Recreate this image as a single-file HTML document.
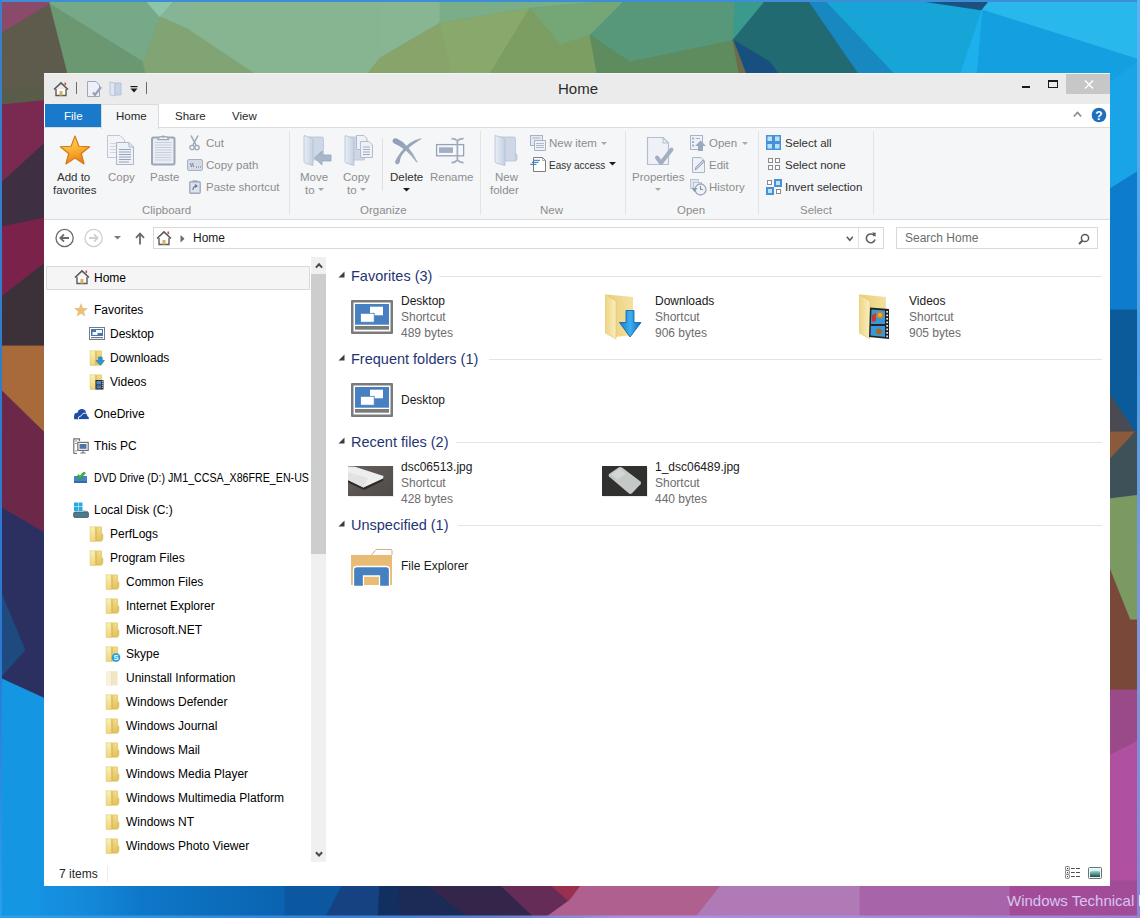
<!DOCTYPE html>
<html><head><meta charset="utf-8">
<style>
html,body{margin:0;padding:0;}
body{width:1140px;height:918px;overflow:hidden;position:relative;font-family:"Liberation Sans",sans-serif;font-size:12px;color:#000;background:#1a9ce0;}
.a{position:absolute;}
.t{position:absolute;white-space:nowrap;line-height:16px;font-size:12px;}
svg{position:absolute;overflow:visible;}
.g{color:#8d8d8d;}
.d{color:#303030;}
</style></head><body>
<!-- WALLPAPER -->
<svg class="a" style="left:0;top:0" width="1140" height="918" viewBox="0 0 1140 918">
<rect x="0" y="0" width="1140" height="918" fill="#1a90d8"/>
<!-- top strip -->
<polygon points="0,0 50,0 50,4 0,34" fill="#8c4a6a" stroke="#8c4a6a" stroke-width="0.8"/>
<polygon points="0,34 50,4 72,90 0,90" fill="#5e5b4c" stroke="#5e5b4c" stroke-width="0.8"/>
<polygon points="50,0 145,0 160,17 143,62 50,4" fill="#76a988" stroke="#76a988" stroke-width="0.8"/>
<polygon points="50,4 143,62 150,90 72,90" fill="#6b9870" stroke="#6b9870" stroke-width="0.8"/>
<polygon points="145,0 175,0 160,17" fill="#8cc4ac" stroke="#8cc4ac" stroke-width="0.8"/>
<polygon points="160,17 175,0 190,0 190,30" fill="#85b595" stroke="#85b595" stroke-width="0.8"/>
<polygon points="160,17 190,30 280,90 150,90 143,62" fill="#80a474" stroke="#80a474" stroke-width="0.8"/>
<polygon points="190,0 380,0 380,58 355,90 280,90 190,30" fill="#88b591" stroke="#88b591" stroke-width="0.8"/>
<polygon points="355,90 380,58 380,90" fill="#8da26c" stroke="#8da26c" stroke-width="0.8"/>
<polygon points="380,0 440,0 440,23 380,58" fill="#88b592" stroke="#88b592" stroke-width="0.8"/>
<polygon points="380,58 440,23 455,90 355,90" fill="#88a46a" stroke="#88a46a" stroke-width="0.8"/>
<polygon points="440,0 625,0 530,8 440,23" fill="#7aae88" stroke="#7aae88" stroke-width="0.8"/>
<polygon points="530,8 625,0 590,35 560,45" fill="#74a676" stroke="#74a676" stroke-width="0.8"/>
<polygon points="440,23 530,8 480,90 455,90" fill="#88a86c" stroke="#88a86c" stroke-width="0.8"/>
<polygon points="530,8 560,45 590,35 600,90 480,90" fill="#7c9e62" stroke="#7c9e62" stroke-width="0.8"/>
<polygon points="625,0 735,0 735,40 630,62 590,35" fill="#58987a" stroke="#58987a" stroke-width="0.8"/>
<polygon points="590,35 630,62 735,40 745,90 600,90" fill="#5e8c5e" stroke="#5e8c5e" stroke-width="0.8"/>
<polygon points="735,0 766,0 733,40" fill="#3a9a8c" stroke="#3a9a8c" stroke-width="0.8"/>
<polygon points="733,40 766,0 808,0 870,90 760,90 745,90" fill="#216a72" stroke="#216a72" stroke-width="0.8"/>
<polygon points="733,40 770,62 790,90 752,90" fill="#17507e" stroke="#17507e" stroke-width="0.8"/>
<polygon points="733,40 752,90 742,90" fill="#6e6a4c" stroke="#6e6a4c" stroke-width="0.8"/>
<polygon points="808,0 825,0 910,90 870,90" fill="#1888c0" stroke="#1888c0" stroke-width="0.8"/>
<polygon points="825,0 915,0 982,10 962,90 910,90" fill="#17a5d8" stroke="#17a5d8" stroke-width="0.8"/>
<polygon points="915,0 990,0 982,10" fill="#1c5080" stroke="#1c5080" stroke-width="0.8"/>
<polygon points="982,10 990,0 1140,0 1140,60" fill="#28b8ec" stroke="#28b8ec" stroke-width="0.8"/>
<polygon points="982,10 1140,60 1140,90 975,90" fill="#14a0e0" stroke="#14a0e0" stroke-width="0.8"/>
<polygon points="982,10 955,90 975,90" fill="#1cb0ec" stroke="#1cb0ec" stroke-width="0.8"/>
<!-- left strip -->
<polygon points="0,88 72,88 72,102 0,105" fill="#5a5c4a" stroke="#5a5c4a" stroke-width="0.8"/>
<polygon points="0,105 50,100 50,138 0,184" fill="#7a2a50" stroke="#7a2a50" stroke-width="0.8"/>
<polygon points="0,184 50,138 50,217 0,227" fill="#3e3042" stroke="#3e3042" stroke-width="0.8"/>
<polygon points="0,227 50,217 50,259 0,298" fill="#7a2249" stroke="#7a2249" stroke-width="0.8"/>
<polygon points="0,298 50,259 50,346 0,346" fill="#3c3039" stroke="#3c3039" stroke-width="0.8"/>
<polygon points="0,346 50,346 50,438 0,389" fill="#a86a3a" stroke="#a86a3a" stroke-width="0.8"/>
<polygon points="0,389 50,438 50,536 0,507" fill="#6c2848" stroke="#6c2848" stroke-width="0.8"/>
<polygon points="0,507 50,536 50,701 0,678" fill="#2c3060" stroke="#2c3060" stroke-width="0.8"/>
<polygon points="0,590 25,650 0,678" fill="#1e4a80" stroke="#1e4a80" stroke-width="0.8"/>
<polygon points="0,678 50,701 50,918 0,918" fill="#1596e2" stroke="#1596e2" stroke-width="0.8"/>
<!-- bottom strip -->
<defs><linearGradient id="bsg" x1="0" y1="0" x2="1" y2="0"><stop offset="0" stop-color="#1592e2"/><stop offset="0.2" stop-color="#1488d8"/><stop offset="0.4" stop-color="#0e78c8"/><stop offset="1" stop-color="#0a62b0"/></linearGradient></defs>
<rect x="40" y="880" width="250" height="38" fill="url(#bsg)"/>
<polygon points="285,880 345,880 325,918 285,918" fill="#0b58a0" stroke="#0b58a0" stroke-width="0.8"/>
<polygon points="345,880 380,880 378,918 325,918" fill="#164282" stroke="#164282" stroke-width="0.8"/>
<polygon points="380,880 398,880 400,918 378,918" fill="#122f62" stroke="#122f62" stroke-width="0.8"/>
<polygon points="398,880 420,880 470,918 400,918" fill="#1c2a56" stroke="#1c2a56" stroke-width="0.8"/>
<polygon points="420,880 495,880 535,918 470,918" fill="#33264a" stroke="#33264a" stroke-width="0.8"/>
<polygon points="495,880 575,880 570,900 545,918 535,918" fill="#652c58" stroke="#652c58" stroke-width="0.8"/>
<polygon points="545,880 585,880 570,902" fill="#9a3050" stroke="#9a3050" stroke-width="0.8"/>
<polygon points="570,900 585,880 725,880 695,918 545,918" fill="#b0608e" stroke="#b0608e" stroke-width="0.8"/>
<polygon points="725,880 860,880 860,918 695,918" fill="#b07ab6" stroke="#b07ab6" stroke-width="0.8"/>
<polygon points="860,880 1010,880 1010,918 860,918" fill="#a864a8" stroke="#a864a8" stroke-width="0.8"/>
<polygon points="1010,880 1140,880 1140,918 1010,918" fill="#a24c98" stroke="#a24c98" stroke-width="0.8"/>
<!-- right strip -->
<polygon points="1100,90 1140,60 1140,170 1100,195" fill="#1aa4e8" stroke="#1aa4e8" stroke-width="0.8"/>
<polygon points="1100,195 1140,170 1140,310 1100,310" fill="#0e7ccc" stroke="#0e7ccc" stroke-width="0.8"/>
<polygon points="1100,310 1140,310 1140,445 1135,432 1100,380" fill="#0b5a9a" stroke="#0b5a9a" stroke-width="0.8"/>
<polygon points="1100,380 1135,432 1100,440" fill="#4a4a52" stroke="#4a4a52" stroke-width="0.8"/>
<polygon points="1100,432 1135,432 1100,475" fill="#8a5a3a" stroke="#8a5a3a" stroke-width="0.8"/>
<polygon points="1100,470 1135,432 1140,440 1140,495 1100,500" fill="#3e5058" stroke="#3e5058" stroke-width="0.8"/>
<polygon points="1100,500 1140,495 1140,620 1130,620 1100,545" fill="#7a9a62" stroke="#7a9a62" stroke-width="0.8"/>
<polygon points="1100,545 1130,620 1140,620 1140,690 1100,690" fill="#7a4838" stroke="#7a4838" stroke-width="0.8"/>
<polygon points="1100,690 1140,690 1140,740 1100,760" fill="#9a4a88" stroke="#9a4a88" stroke-width="0.8"/>
<polygon points="1100,760 1140,740 1140,880 1100,880" fill="#b050a0" stroke="#b050a0" stroke-width="0.8"/>
<!-- frame lines -->
<defs>
<linearGradient id="frb" x1="0" y1="0" x2="1" y2="0"><stop offset="0" stop-color="#28a0f0"/><stop offset="0.3" stop-color="#3a80d8"/><stop offset="0.45" stop-color="#6a80d0"/><stop offset="0.55" stop-color="#b090e0"/><stop offset="1" stop-color="#9a84d8"/></linearGradient>
<linearGradient id="frr" x1="0" y1="0" x2="0" y2="1"><stop offset="0" stop-color="#5ab4f4"/><stop offset="0.4" stop-color="#4a9ce8"/><stop offset="0.6" stop-color="#7a9ad8"/><stop offset="1" stop-color="#8a84d8"/></linearGradient>
<linearGradient id="frl" x1="0" y1="0" x2="0" y2="1"><stop offset="0" stop-color="#3a80c8"/><stop offset="0.7" stop-color="#2a78d0"/><stop offset="1" stop-color="#28a0f0"/></linearGradient>
</defs>
<rect x="0" y="0" width="1140" height="2" fill="#3d8ed6"/>
<rect x="0" y="0" width="2" height="918" fill="url(#frl)"/>
<rect x="1137" y="0" width="3" height="918" fill="url(#frr)"/>
<rect x="0" y="915.5" width="1140" height="2.5" fill="url(#frb)"/>
</svg>
<div class="t" style="left:1007px;top:891px;font-size:15px;line-height:20px;color:#d6c6f0;">Windows Technical</div>


<svg width="0" height="0" style="position:absolute;left:0;top:0">
<defs>
<symbol id="star" viewBox="0 0 16 16"><polygon points="8.0,1.0 9.9,5.9 15.1,6.2 11.0,9.5 12.4,14.6 8.0,11.7 3.6,14.6 5.0,9.5 0.9,6.2 6.1,5.9" fill="#e8c27c"/></symbol>
<symbol id="fld" viewBox="0 0 16 16">
<linearGradient id="fgb" x1="0" y1="0" x2="0" y2="1"><stop offset="0" stop-color="#f3dc86"/><stop offset="1" stop-color="#e2c25e"/></linearGradient>
<linearGradient id="fgf" x1="0" y1="0" x2="0" y2="1"><stop offset="0" stop-color="#fbf1b6"/><stop offset="1" stop-color="#eed47a"/></linearGradient>
<path d="M12.4 7.4 L13.9 8.3 V13.6 L12.4 14.6Z" fill="#e6c864" stroke="#d6b654" stroke-width="0.5"/>
<path d="M6.4 0.9 H12.6 V15.2 H6.4Z" fill="url(#fgb)" stroke="#d8bc5c" stroke-width="0.6"/>
<path d="M1.1 0.8 H6.6 V15.5 H1.1Z" fill="url(#fgf)" stroke="#e2c868" stroke-width="0.6"/>
<path d="M7 1.2 V15" stroke="#d4b050" stroke-width="0.9"/>
</symbol>
<symbol id="fldh" viewBox="0 0 16 16">
<path d="M1.2 1.2 H12.6 V15.4 H1.2Z" fill="#f2e6c6"/>
<path d="M1.2 1.2 H6.6 V15.4 H1.2Z" fill="#f8f1dc"/>
<path d="M6.7 1.5 V15.4" stroke="#e8dab4" stroke-width="0.7"/>
</symbol>
<symbol id="skype" viewBox="0 0 16 16">
<use href="#fld"/>
<circle cx="11" cy="11.5" r="4.3" fill="#1aa0e8"/>
<text x="11" y="14.3" font-family="Liberation Sans" font-weight="bold" font-size="7.5" fill="#fff" text-anchor="middle">S</text>
</symbol>
<symbol id="dl" viewBox="0 0 16 16">
<use href="#fld"/>
<path d="M9.5 7 H13 V10.5 H15.5 L11.25 15.2 L7 10.5 H9.5Z" fill="#2a94dc" stroke="#1a78c0" stroke-width="0.6"/>
</symbol>
<symbol id="vid" viewBox="0 0 16 16">
<use href="#fld"/>
<rect x="6.5" y="6" width="8" height="9.5" fill="#2a2a2a"/>
<rect x="7.5" y="7" width="4.5" height="3.5" fill="#4a8cc8"/><rect x="7.5" y="11.3" width="4.5" height="3.3" fill="#3a7ab8"/>
<g fill="#fff"><rect x="12.8" y="6.8" width="1" height="1"/><rect x="12.8" y="8.8" width="1" height="1"/><rect x="12.8" y="10.8" width="1" height="1"/><rect x="12.8" y="12.8" width="1" height="1"/></g>
</symbol>
<symbol id="desk" viewBox="0 0 16 16">
<rect x="0.5" y="1.5" width="15" height="12" fill="#fff" stroke="#6e7e90" stroke-width="1"/>
<rect x="2" y="3" width="12" height="7" fill="#4d74a8"/>
<rect x="7" y="4" width="6" height="3" fill="#f4f8fc"/><rect x="3.5" y="6" width="5" height="3" fill="#f4f8fc"/>
<rect x="2" y="11" width="12" height="1.2" fill="#6e7e90"/>
</symbol>
<symbol id="cloud" viewBox="0 0 16 16">
<g fill="#1d4fa8"><circle cx="4.3" cy="10" r="3.2"/><circle cx="8.8" cy="7.2" r="4.3"/><rect x="1.1" y="10" width="9" height="3.2"/></g>
<path d="M5.2 13.6 Q4.8 10.2 8.2 9.8 Q9.6 6.4 12.6 7.2 Q15 7.9 14.9 10.3 Q16.6 10.7 16.4 12.4 Q16.3 13.6 15 13.6 Z" fill="#1d4fa8" stroke="#fff" stroke-width="0.9"/>
</symbol>
<symbol id="pc" viewBox="0 0 16 16">
<path d="M0.8 15.5 V0.8 H6.5 V3" fill="none" stroke="#707070" stroke-width="1.2"/>
<path d="M0.8 15.5 H4" fill="none" stroke="#707070" stroke-width="1.2"/>
<rect x="2.2" y="2.5" width="2" height="0.9" fill="#707070"/><rect x="2.2" y="5" width="1.5" height="0.9" fill="#707070"/><rect x="2.2" y="12.5" width="1.5" height="0.9" fill="#707070"/>
<rect x="4.8" y="4.4" width="10.4" height="8" fill="#fff" stroke="#707070" stroke-width="1.2"/>
<rect x="6.5" y="6" width="7" height="4.8" fill="#4d74a8"/>
<path d="M10 12.6 V14.6 M7.3 15 H12.7" stroke="#707070" stroke-width="1.2"/>
</symbol>
<symbol id="dvd" viewBox="0 0 16 16">
<rect x="1" y="6" width="13" height="7" fill="#4a82c4"/>
<rect x="1" y="11" width="13" height="2" fill="#3a6aa8"/>
<path d="M4 6.5 L7 9.5 L12.5 3 Q11 1.5 9.5 3 L7 6 L5.5 4.5Z" fill="#32b83a" stroke="#1a8a2a" stroke-width="0.5"/>
</symbol>
<symbol id="disk" viewBox="0 0 16 16">
<rect x="1" y="0.5" width="4" height="4" fill="#27aadf"/><rect x="5.5" y="0.5" width="4" height="4" fill="#27aadf"/>
<rect x="1" y="5" width="4" height="4" fill="#27aadf"/><rect x="5.5" y="5" width="4" height="4" fill="#27aadf"/>
<rect x="0.6" y="10" width="15" height="5.5" rx="1.5" fill="#5a7282" stroke="#4a5a68" stroke-width="0.8"/>
<rect x="2" y="11.5" width="11" height="2.2" fill="#2e8a9a"/>
<path d="M10 9.2 H13 L15 10" fill="none" stroke="#6a7a88" stroke-width="0.8"/>
</symbol>
</defs>
</svg>

<!-- WINDOW -->
<div class="a" id="win" style="left:44px;top:73px;width:1066px;height:813px;background:#fff;"></div>
<!-- title bar -->
<div class="a" style="left:44px;top:73px;width:1066px;height:31px;background:#ebebeb;border-top:1px solid #f3f5f5;box-sizing:border-box;"></div>
<div class="t" style="left:558px;top:79px;font-size:15px;line-height:20px;color:#2b2b2b;">Home</div>
<!-- close -->
<div class="a" style="left:1066px;top:74px;width:44px;height:20px;background:#c7c7c7;"></div>
<!-- tabs row -->
<div class="a" style="left:44px;top:104px;width:1066px;height:23px;background:#fff;"></div>
<div class="a" style="left:45px;top:104px;width:56px;height:23px;background:#1979ca;"></div>
<div class="t" style="left:64px;top:108px;font-size:11.5px;color:#fff;">File</div>
<!-- ribbon -->
<div class="a" style="left:44px;top:127px;width:1066px;height:91px;background:#f5f6f7;border-top:1px solid #dadbdc;border-bottom:1px solid #dadbdc;"></div>
<!-- home tab -->
<div class="a" style="left:101px;top:104px;width:56px;height:24px;background:#f5f6f7;border:1px solid #dadbdc;border-bottom:none;"></div>
<div class="t" style="left:116px;top:108px;font-size:11.5px;color:#262626;">Home</div>
<div class="t" style="left:175px;top:108px;font-size:11.5px;color:#262626;">Share</div>
<div class="t" style="left:232px;top:108px;font-size:11.5px;color:#262626;">View</div>

<!-- title bar icons -->
<svg style="left:53px;top:81px" width="16" height="16" viewBox="0 0 16 16">
<path d="M3 8 V14.5 H13 V8" fill="#fffdf5" stroke="#5a5a5a" stroke-width="1.4"/>
<path d="M1 8.5 L8 1.8 L15 8.5" fill="none" stroke="#5a5a5a" stroke-width="1.6"/>
<rect x="6.5" y="10" width="3" height="4.5" fill="#d8b26a"/>
<rect x="11.5" y="1.5" width="1.6" height="2.6" fill="#c8503c"/>
</svg>
<div class="a" style="left:76px;top:82px;width:1px;height:12px;background:#6a6a6a;"></div>
<svg style="left:87px;top:81px" width="16" height="16" viewBox="0 0 16 16">
<path d="M0.5 0.5 H9 L12.5 4 V15.5 H0.5 Z" fill="#eef0f8" stroke="#a0a8b8"/>
<path d="M6 11.5 L8 14 L14 6" fill="none" stroke="#98a0b8" stroke-width="2.2"/>
</svg>
<svg style="left:109px;top:81px" width="14" height="16" viewBox="0 0 14 16">
<path d="M1 1 L6 2 V15 L1 14 Z" fill="#dde6f2" stroke="#b4c0d2" stroke-width="0.8"/>
<path d="M6 2 H12 V14 H6 Z" fill="#c8d4e6" stroke="#b0bcd0" stroke-width="0.8"/>
</svg>
<svg style="left:130px;top:86px" width="8" height="7" viewBox="0 0 8 7">
<rect x="0.5" y="0" width="7" height="1.2" fill="#1a1a1a"/><path d="M0.5 2.5 H7.5 L4 6.5 Z" fill="#1a1a1a"/>
</svg>
<div class="a" style="left:146px;top:82px;width:1px;height:12px;background:#6a6a6a;"></div>
<!-- window buttons -->
<div class="a" style="left:1022px;top:86px;width:8px;height:2px;background:#1a1a1a;"></div>
<div class="a" style="left:1048px;top:80px;width:8px;height:5px;border:1px solid #1a1a1a;border-top-width:2px;"></div>
<svg style="left:1084px;top:80px" width="10" height="9" viewBox="0 0 10 9"><path d="M1 0.5 L9 8.5 M9 0.5 L1 8.5" stroke="#fff" stroke-width="1.4"/></svg>
<svg style="left:1073px;top:110px" width="9" height="8" viewBox="0 0 9 8"><path d="M0.8 6.5 L4.5 2.5 L8.2 6.5" fill="none" stroke="#8a8a8a" stroke-width="1.6"/></svg>
<svg style="left:1091px;top:107px" width="16" height="16" viewBox="0 0 16 16"><circle cx="8" cy="8" r="7.3" fill="#1d6fc0"/><text x="8" y="12.6" font-family="Liberation Sans" font-weight="bold" font-size="12" fill="#fff" text-anchor="middle">?</text></svg>

<!-- RIBBON: Clipboard -->
<svg style="left:59px;top:135px" width="32" height="31" viewBox="0 0 32 31">
<defs><linearGradient id="sg" x1="0" y1="0" x2="0.3" y2="1"><stop offset="0" stop-color="#ffe066"/><stop offset="0.55" stop-color="#fbb437"/><stop offset="1" stop-color="#ee8416"/></linearGradient></defs>
<polygon points="16.0,1.0 19.9,11.2 30.7,11.7 22.3,18.5 25.1,29.0 16.0,23.1 6.9,29.0 9.7,18.5 1.3,11.7 12.1,11.2" fill="url(#sg)" stroke="#d27712" stroke-width="1.1" stroke-linejoin="round"/>
</svg>
<div class="t d" style="left:57px;top:169px;font-size:11.5px;">Add to</div>
<div class="t d" style="left:53px;top:182px;font-size:11.5px;">favorites</div>
<svg style="left:107px;top:135px" width="28" height="31" viewBox="0 0 28 31">
<path d="M0.5 0.5 H13 L17.5 5 V22.5 H0.5 Z" fill="#f2f4f8" stroke="#c0c6d2"/>
<g stroke="#d0d6e0"><path d="M3 8.5H14M3 11.5H14M3 14.5H14M3 17.5H14"/></g>
<path d="M9.5 7.5 H22 L26.5 12 V29.5 H9.5 Z" fill="#eef1f7" stroke="#aeb6c6"/>
<path d="M22 7.5 V12 H26.5" fill="none" stroke="#aeb6c6"/>
<g stroke="#98a4b8"><path d="M12 14.5H24M12 17H24M12 19.5H24M12 22H24M12 24.5H24M12 27H22"/></g>
</svg>
<div class="t g" style="left:108px;top:169px;font-size:11.5px;">Copy</div>
<svg style="left:151px;top:135px" width="25" height="31" viewBox="0 0 25 31">
<rect x="1" y="2.5" width="22.5" height="27" rx="1.5" fill="#e9edf4" stroke="#9ea7b8" stroke-width="2"/>
<g stroke="#c4cad6" stroke-width="0.9"><path d="M4 7.5H20.5M4 10H20.5M4 12.5H20.5M4 15H20.5M4 17.5H20.5M4 20H20.5M4 22.5H20.5M4 25H20.5"/></g>
<path d="M7 4.6 Q7.5 1.6 10.5 1.6 H14 Q17 1.6 17.5 4.6 Z" fill="#f0f2f6" stroke="#9ea7b8" stroke-width="1.2"/>
<circle cx="12.25" cy="1.6" r="1" fill="none" stroke="#9ea7b8" stroke-width="0.8"/>
</svg>
<div class="t g" style="left:150px;top:169px;font-size:11.5px;">Paste</div>
<svg style="left:189px;top:135px" width="11" height="16" viewBox="0 0 11 16">
<path d="M2 0.5 L7 10 M9 0.5 L4 10" stroke="#a0a8b8" stroke-width="1.6"/>
<circle cx="3" cy="12.5" r="2.2" fill="none" stroke="#a0a8b8" stroke-width="1.3"/><circle cx="8" cy="12.5" r="2.2" fill="none" stroke="#a0a8b8" stroke-width="1.3"/>
</svg>
<div class="t g" style="left:206px;top:135px;font-size:11.5px;">Cut</div>
<svg style="left:187px;top:159px" width="16" height="12" viewBox="0 0 16 12">
<rect x="0.5" y="0.5" width="15" height="11" rx="1.5" fill="#d4dae6" stroke="#a8b2c4"/>
<path d="M3.5 4 L4.5 8 M5.5 4 L6.5 8" stroke="#6a7488" stroke-width="0.9"/><path d="M9 8H10M11 8H12M13 8H14" stroke="#6a7488"/>
</svg>
<div class="t g" style="left:206px;top:157px;font-size:11.5px;">Copy path</div>
<svg style="left:189px;top:180px" width="12" height="14" viewBox="0 0 12 14">
<rect x="0.8" y="1.8" width="10.4" height="11.4" rx="1" fill="#dde3ee" stroke="#a0aabc" stroke-width="1.4"/>
<rect x="3.5" y="0.3" width="5" height="2" fill="#a0aabc"/>
<path d="M4 10 Q4 6 7.5 6 M6 4.5 L8 6 L6 7.5" fill="none" stroke="#6a7488" stroke-width="1.1"/>
</svg>
<div class="t g" style="left:206px;top:179px;font-size:11.5px;">Paste shortcut</div>
<div class="t g" style="left:142px;top:202px;font-size:11.5px;">Clipboard</div>
<div class="a" style="left:289px;top:131px;width:1px;height:84px;background:#e2e3e4;"></div>

<!-- RIBBON: Organize -->
<svg style="left:303px;top:134px" width="29" height="33" viewBox="0 0 29 33">
<defs><linearGradient id="fg" x1="0" y1="0" x2="1" y2="0"><stop offset="0" stop-color="#e8eef6"/><stop offset="1" stop-color="#c4d0e2"/></linearGradient></defs>
<path d="M6 3 H19 Q20.5 3 20.5 4.5 V26 H6 Z" fill="#cdd7e6" stroke="#b8c4d6" stroke-width="0.8"/>
<path d="M1 1.5 L9 4 Q10 4.5 10 6 V31.5 L2 29 Q1 28.5 1 27 Z" fill="url(#fg)" stroke="#b4c0d4" stroke-width="0.8"/>
<path d="M11.5 24 L19 17 V21 H28 V27 H19 V31 Z" fill="#a8b6cc" stroke="#96a4bc" stroke-width="0.8"/>
</svg>
<div class="t g" style="left:300px;top:169px;font-size:11.5px;">Move</div>
<div class="t g" style="left:305px;top:182px;font-size:11.5px;">to</div>
<svg style="left:318px;top:188px" width="6" height="4" viewBox="0 0 6 4"><path d="M0 0H6L3 3Z" fill="#a8a8a8"/></svg>
<svg style="left:344px;top:134px" width="30" height="33" viewBox="0 0 30 33">
<path d="M6 3 H19 Q20.5 3 20.5 4.5 V26 H6 Z" fill="#cdd7e6" stroke="#b8c4d6" stroke-width="0.8"/>
<path d="M1 1.5 L9 4 Q10 4.5 10 6 V31.5 L2 29 Q1 28.5 1 27 Z" fill="url(#fg)" stroke="#b4c0d4" stroke-width="0.8"/>
<path d="M12.5 1.5 H20 L23 4.5 V15.5 H12.5 Z" fill="#eef1f7" stroke="#aeb6c6" stroke-width="0.9"/>
<path d="M16.5 7.5 H25 L28.5 11 V23.5 H16.5 Z" fill="#eef1f7" stroke="#aeb6c6" stroke-width="0.9"/>
<g stroke="#98a4b8" stroke-width="0.9"><path d="M19 13H26M19 15.5H26M19 18H26M19 20.5H26"/></g>
</svg>
<div class="t g" style="left:343px;top:169px;font-size:11.5px;">Copy</div>
<div class="t g" style="left:347px;top:182px;font-size:11.5px;">to</div>
<svg style="left:360px;top:188px" width="6" height="4" viewBox="0 0 6 4"><path d="M0 0H6L3 3Z" fill="#a8a8a8"/></svg>
<div class="a" style="left:382px;top:138px;width:1px;height:53px;background:#dfe0e2;"></div>
<svg style="left:392px;top:137px" width="31" height="29" viewBox="0 0 31 29">
<defs><linearGradient id="xg" x1="0" y1="0" x2="1" y2="1"><stop offset="0" stop-color="#8e9cb4"/><stop offset="1" stop-color="#a4b0c4"/></linearGradient></defs>
<path d="M0.6 3.2 Q1.8 0.6 5 1.6 Q16 6.5 25.6 25 Q24.8 25.8 24 24.8 Q14.5 11.5 1.8 6.2 Q0.2 5 0.6 3.2 Z" fill="url(#xg)"/>
<path d="M29.2 1.2 Q17 3.5 8.5 15.5 Q4.5 21 3.2 24.5 Q2.8 27.6 5.6 27.2 Q8.2 26.4 8.2 22.2 Q10.5 13.5 29.4 2 Z" fill="url(#xg)"/>
</svg>
<div class="t d" style="left:390px;top:169px;font-size:11.5px;">Delete</div>
<svg style="left:403px;top:188px" width="7" height="4" viewBox="0 0 7 4"><path d="M0 0H7L3.5 3.5Z" fill="#1a1a1a"/></svg>
<svg style="left:436px;top:137px" width="29" height="27" viewBox="0 0 29 27">
<rect x="0.6" y="7.6" width="27" height="11.2" fill="#f6f8fb" stroke="#96a2b6" stroke-width="1.3"/>
<rect x="3" y="10.3" width="14" height="5.6" fill="#a2aec2"/>
<path d="M15.5 1.6 Q19 1.4 21.4 3.8 Q24 1.4 27.6 1.6 M21.4 3.8 V23.2 M15.5 25.6 Q19 25.8 21.4 23.2 Q24 25.8 27.6 25.6" fill="none" stroke="#a0acc0" stroke-width="1.7"/>
</svg>
<div class="t g" style="left:430px;top:169px;font-size:11.5px;">Rename</div>
<div class="t g" style="left:360px;top:202px;font-size:11.5px;">Organize</div>
<div class="a" style="left:480px;top:131px;width:1px;height:84px;background:#e2e3e4;"></div>

<!-- RIBBON: New -->
<svg style="left:494px;top:134px" width="24" height="33" viewBox="0 0 24 33">
<path d="M6 3 H20 Q21.5 3 21.5 4.5 V27 H6 Z" fill="#cdd7e6" stroke="#b8c4d6" stroke-width="0.8"/>
<path d="M1 1.5 L10 4 Q11 4.5 11 6 V31.5 L2 29 Q1 28.5 1 27 Z" fill="url(#fg)" stroke="#b4c0d4" stroke-width="0.8"/>
<path d="M21.5 19 L23 21 V26 L21.5 27" fill="#c0cce0" stroke="#b4c0d4" stroke-width="0.6"/>
</svg>
<div class="t g" style="left:495px;top:169px;font-size:11.5px;">New</div>
<div class="t g" style="left:490px;top:182px;font-size:11.5px;">folder</div>
<svg style="left:530px;top:135px" width="16" height="16" viewBox="0 0 16 16">
<rect x="0.5" y="0.5" width="12" height="10" fill="#e4e9f2" stroke="#a8b2c4"/>
<path d="M2.5 3 H10" stroke="#a8b2c4"/>
<path d="M4.5 5.5 H15.5 V15.5 H4.5 Z" fill="#eef1f7" stroke="#a8b2c4"/>
<path d="M6 8.5H14M6 10.5H14M6 12.5H14" stroke="#b0b9c8"/>
</svg>
<div class="t g" style="left:549px;top:135px;font-size:11.5px;">New item</div>
<svg style="left:601px;top:142px" width="6" height="4" viewBox="0 0 6 4"><path d="M0 0H6L3 3Z" fill="#a8a8a8"/></svg>
<svg style="left:530px;top:157px" width="17" height="16" viewBox="0 0 17 16">
<path d="M3.5 0.5 H12.5 L15.5 3.5 V14.5 H3.5 Z" fill="#fff" stroke="#6e6e6e" stroke-width="0.9"/>
<path d="M12.5 0.5 V3.5 H15.5" fill="none" stroke="#8a8a8a" stroke-width="0.7"/>
<path d="M4 3.3 H10 M2 5.3 H8.5 M0.3 7.3 H6.5" stroke="#2a74c0" stroke-width="1"/>
</svg>
<div class="t d" style="left:549px;top:157px;font-size:11.5px;"><span style="display:inline-block;transform:scaleX(0.87);transform-origin:0 0;">Easy access</span></div>
<svg style="left:609px;top:162px" width="7" height="4" viewBox="0 0 7 4"><path d="M0 0H7L3.5 3.5Z" fill="#1a1a1a"/></svg>
<div class="t g" style="left:540px;top:202px;font-size:11.5px;">New</div>
<div class="a" style="left:625px;top:131px;width:1px;height:84px;background:#e2e3e4;"></div>

<!-- RIBBON: Open -->
<svg style="left:646px;top:136px" width="28" height="31" viewBox="0 0 28 31">
<path d="M1.5 1.5 H17 L22.5 7 V28.5 H1.5 Z" fill="#eef2f8" stroke="#b4bed0" stroke-width="1.2"/>
<path d="M17 1.5 V7 H22.5" fill="none" stroke="#b4bed0"/>
<path d="M11 21.5 L15 27 L25.5 13.5" fill="none" stroke="#a2aec2" stroke-width="4" stroke-linecap="round" stroke-linejoin="round"/>
</svg>
<div class="t g" style="left:632px;top:169px;font-size:11.5px;">Properties</div>
<svg style="left:655px;top:188px" width="6" height="4" viewBox="0 0 6 4"><path d="M0 0H6L3 3Z" fill="#a8a8a8"/></svg>
<svg style="left:690px;top:135px" width="17" height="17" viewBox="0 0 17 17">
<rect x="0.5" y="0.5" width="12" height="14" fill="#eef1f7" stroke="#aab4c6"/>
<rect x="2" y="2.5" width="2" height="2" fill="#aab4c6"/><rect x="2" y="6" width="2" height="2" fill="#aab4c6"/><rect x="2" y="9.5" width="2" height="2" fill="#aab4c6"/>
<path d="M5.5 3.5H10" stroke="#aab4c6"/>
<path d="M5 11 L10.5 5.5 L16 11 H13 V16 H8 V11 Z" fill="#9aa8c0"/>
</svg>
<div class="t g" style="left:709px;top:135px;font-size:11.5px;">Open</div>
<svg style="left:742px;top:142px" width="6" height="4" viewBox="0 0 6 4"><path d="M0 0H6L3 3Z" fill="#a8a8a8"/></svg>
<svg style="left:692px;top:157px" width="14" height="16" viewBox="0 0 14 16">
<path d="M0.5 0.5 H9 L12.5 4 V15.5 H0.5 Z" fill="#eef1f7" stroke="#aab4c6"/>
<path d="M3 13 L4 10 L11 3 L12.5 4.5 L5.5 11.5 Z" fill="#c4ccdb" stroke="#8e9ab0" stroke-width="0.8"/>
</svg>
<div class="t g" style="left:709px;top:157px;font-size:11.5px;">Edit</div>
<svg style="left:690px;top:179px" width="17" height="17" viewBox="0 0 17 17">
<rect x="0.5" y="0.5" width="8" height="9" fill="#dfe4ee" stroke="#b4bdcc" stroke-width="0.8"/>
<rect x="3.5" y="3.5" width="8" height="8" fill="#e8ecf4" stroke="#b4bdcc" stroke-width="0.8"/>
<circle cx="10.5" cy="10.5" r="5.5" fill="#eef1f7" stroke="#9aa6ba" stroke-width="1.3"/>
<path d="M10.5 7 V10.5 H13" fill="none" stroke="#8090a8" stroke-width="1.1"/>
<path d="M1.5 9 L4.5 13 L7.5 9" fill="#8e9ab0"/>
</svg>
<div class="t g" style="left:709px;top:179px;font-size:11.5px;">History</div>
<div class="t g" style="left:677px;top:202px;font-size:11.5px;">Open</div>
<div class="a" style="left:758px;top:131px;width:1px;height:84px;background:#e2e3e4;"></div>

<!-- RIBBON: Select -->
<svg style="left:766px;top:135px" width="16" height="16" viewBox="0 0 16 16">
<rect x="0" y="0" width="15" height="15" fill="#4a90d8"/>
<rect x="1.5" y="1.5" width="4.5" height="4.5" fill="#b4e4fa"/><rect x="9" y="1.5" width="4.5" height="4.5" fill="#b4e4fa"/>
<rect x="1.5" y="9" width="4.5" height="4.5" fill="#b4e4fa"/><rect x="9" y="9" width="4.5" height="4.5" fill="#b4e4fa"/>
</svg>
<div class="t d" style="left:785px;top:135px;font-size:11.5px;">Select all</div>
<svg style="left:768px;top:158px" width="13" height="13" viewBox="0 0 13 13">
<g fill="#fff" stroke="#8a8a8a" stroke-width="1"><rect x="0.5" y="0.5" width="4" height="4"/><rect x="7.5" y="0.5" width="4" height="4"/><rect x="0.5" y="7.5" width="4" height="4"/><rect x="7.5" y="7.5" width="4" height="4"/></g>
</svg>
<div class="t d" style="left:785px;top:157px;font-size:11.5px;">Select none</div>
<svg style="left:766px;top:179px" width="17" height="17" viewBox="0 0 17 17">
<rect x="0" y="8" width="8" height="8" fill="#4a90d8"/><rect x="8" y="0" width="8" height="8" fill="#4a90d8"/>
<rect x="2" y="10" width="4" height="4" fill="#b4e4fa"/><rect x="10" y="2" width="4" height="4" fill="#b4e4fa"/>
<g fill="#fff" stroke="#8a8a8a" stroke-width="1"><rect x="1.5" y="1.5" width="4" height="4"/><rect x="10.5" y="10.5" width="4" height="4"/></g>
</svg>
<div class="t d" style="left:785px;top:179px;font-size:11.5px;">Invert selection</div>
<div class="t g" style="left:800px;top:202px;font-size:11.5px;">Select</div>
<div class="a" style="left:873px;top:131px;width:1px;height:84px;background:#e2e3e4;"></div>

<!-- ADDRESS BAR -->
<svg style="left:55px;top:228px" width="20" height="20" viewBox="0 0 20 20">
<circle cx="9.6" cy="10" r="8.6" fill="none" stroke="#6a6a6a" stroke-width="1.3"/>
<path d="M14 10 H5.5 M9 6.3 L5.3 10 L9 13.7" fill="none" stroke="#6a6a6a" stroke-width="1.8"/>
</svg>
<svg style="left:84px;top:228px" width="20" height="20" viewBox="0 0 20 20">
<circle cx="9.6" cy="10" r="8.6" fill="none" stroke="#cfcfcf" stroke-width="1.3"/>
<path d="M5 10 H13.5 M10 6.3 L13.7 10 L10 13.7" fill="none" stroke="#cfcfcf" stroke-width="1.8"/>
</svg>
<svg style="left:114px;top:236px" width="8" height="5" viewBox="0 0 8 5"><path d="M0 0H7L3.5 3.5Z" fill="#7a7a7a"/></svg>
<svg style="left:135px;top:232px" width="10" height="13" viewBox="0 0 10 13">
<path d="M5 12.5 V2 M1 5.8 L5 1.5 L9 5.8" fill="none" stroke="#6a6a6a" stroke-width="1.8"/>
</svg>
<div class="a" style="left:153px;top:227px;width:729px;height:20px;border:1px solid #d9d9d9;background:#fff;"></div>
<div class="a" style="left:858px;top:228px;width:1px;height:20px;background:#e2e2e2;"></div>
<svg style="left:156px;top:230px" width="16" height="16" viewBox="0 0 16 16">
<path d="M3 8 V14.5 H13 V8" fill="#fffdf5" stroke="#5a5a5a" stroke-width="1.4"/>
<path d="M1 8.5 L8 1.8 L15 8.5" fill="none" stroke="#5a5a5a" stroke-width="1.6"/>
<rect x="6.5" y="10" width="3" height="4.5" fill="#d8b26a"/>
<rect x="11.5" y="1.5" width="1.6" height="2.6" fill="#c8503c"/>
</svg>
<svg style="left:180px;top:235px" width="5" height="8" viewBox="0 0 5 8"><path d="M0.5 0 L4.5 3.8 L0.5 7.6Z" fill="#6a6a6a"/></svg>
<div class="t d" style="left:193px;top:230px;color:#1a1a1a;">Home</div>
<svg style="left:846px;top:236px" width="8" height="6" viewBox="0 0 8 6"><path d="M0.8 0.8 L3.8 4.3 L6.8 0.8" fill="none" stroke="#5a5a5a" stroke-width="1.5"/></svg>
<svg style="left:865px;top:232px" width="12" height="12" viewBox="0 0 12 12">
<path d="M9.6 4.2 A4.4 4.4 0 1 0 10 7.5" fill="none" stroke="#5e5e5e" stroke-width="1.6"/>
<path d="M7 0.5 L10.8 0.8 L10.5 4.8 Z" fill="#5e5e5e"/>
</svg>
<div class="a" style="left:896px;top:227px;width:200px;height:20px;border:1px solid #d9d9d9;background:#fff;"></div>
<div class="t" style="left:905px;top:230px;color:#6d6d6d;">Search Home</div>
<svg style="left:1078px;top:233px" width="12" height="12" viewBox="0 0 12 12">
<circle cx="7" cy="5" r="3.6" fill="none" stroke="#5a5a5a" stroke-width="1.5"/>
<path d="M4.5 7.5 L1 11" stroke="#5a5a5a" stroke-width="2"/>
</svg>

<!-- NAV PANE -->
<div class="a" style="left:46px;top:266px;width:262px;height:22px;background:#f5f5f5;border:1px solid #dadada;"></div>
<svg style="left:74px;top:269px" width="16" height="16" viewBox="0 0 16 16">
<path d="M3 8 V14.5 H13 V8" fill="#fffdf5" stroke="#5a5a5a" stroke-width="1.4"/>
<path d="M1 8.5 L8 1.8 L15 8.5" fill="none" stroke="#5a5a5a" stroke-width="1.6"/>
<rect x="6.5" y="10" width="3" height="4.5" fill="#d8b26a"/>
<rect x="11.5" y="1.5" width="1.6" height="2.6" fill="#c8503c"/>
</svg>
<div class="t" style="left:94px;top:270px;">Home</div>
<!-- scrollbar -->
<div class="a" style="left:311px;top:257px;width:15px;height:605px;background:#f0f0f0;"></div>
<div class="a" style="left:311px;top:274px;width:15px;height:280px;background:#cdcdcd;"></div>
<svg style="left:315px;top:262px" width="8" height="7" viewBox="0 0 8 7"><path d="M0.9 5.6 L4 2.3 L7.1 5.6" fill="none" stroke="#4a4a4a" stroke-width="2"/></svg>
<svg style="left:315px;top:851px" width="8" height="7" viewBox="0 0 8 7"><path d="M0.9 1.2 L4 4.5 L7.1 1.2" fill="none" stroke="#4a4a4a" stroke-width="2"/></svg>

<svg style="left:73px;top:302px" width="16" height="16"><use href="#star"/></svg>
<div class="t" style="left:94px;top:302px;">Favorites</div>
<svg style="left:89px;top:326px" width="16" height="16"><use href="#desk"/></svg>
<div class="t" style="left:110px;top:326px;">Desktop</div>
<svg style="left:89px;top:350px" width="16" height="16"><use href="#dl"/></svg>
<div class="t" style="left:110px;top:350px;">Downloads</div>
<svg style="left:89px;top:374px" width="16" height="16"><use href="#vid"/></svg>
<div class="t" style="left:110px;top:374px;">Videos</div>
<svg style="left:73px;top:406px" width="16" height="16"><use href="#cloud"/></svg>
<div class="t" style="left:94px;top:406px;">OneDrive</div>
<svg style="left:73px;top:438px" width="16" height="16"><use href="#pc"/></svg>
<div class="t" style="left:94px;top:438px;">This PC</div>
<svg style="left:73px;top:470px" width="16" height="16"><use href="#dvd"/></svg>
<div class="t" style="left:94px;top:470px;width:215px;overflow:hidden;"><span style="display:inline-block;transform:scaleX(0.888);transform-origin:0 0;">DVD Drive (D:) JM1_CCSA_X86FRE_EN-US</span></div>
<svg style="left:73px;top:502px" width="16" height="16"><use href="#disk"/></svg>
<div class="t" style="left:94px;top:502px;">Local Disk (C:)</div>
<svg style="left:89px;top:526px" width="16" height="16"><use href="#fld"/></svg>
<div class="t" style="left:110px;top:526px;">PerfLogs</div>
<svg style="left:89px;top:550px" width="16" height="16"><use href="#fld"/></svg>
<div class="t" style="left:110px;top:550px;">Program Files</div>
<svg style="left:105px;top:574px" width="16" height="16"><use href="#fld"/></svg>
<div class="t" style="left:126px;top:574px;">Common Files</div>
<svg style="left:105px;top:598px" width="16" height="16"><use href="#fld"/></svg>
<div class="t" style="left:126px;top:598px;">Internet Explorer</div>
<svg style="left:105px;top:622px" width="16" height="16"><use href="#fld"/></svg>
<div class="t" style="left:126px;top:622px;">Microsoft.NET</div>
<svg style="left:105px;top:646px" width="16" height="16"><use href="#skype"/></svg>
<div class="t" style="left:126px;top:646px;">Skype</div>
<svg style="left:105px;top:670px" width="16" height="16"><use href="#fldh"/></svg>
<div class="t" style="left:126px;top:670px;">Uninstall Information</div>
<svg style="left:105px;top:694px" width="16" height="16"><use href="#fld"/></svg>
<div class="t" style="left:126px;top:694px;">Windows Defender</div>
<svg style="left:105px;top:718px" width="16" height="16"><use href="#fld"/></svg>
<div class="t" style="left:126px;top:718px;">Windows Journal</div>
<svg style="left:105px;top:742px" width="16" height="16"><use href="#fld"/></svg>
<div class="t" style="left:126px;top:742px;">Windows Mail</div>
<svg style="left:105px;top:766px" width="16" height="16"><use href="#fld"/></svg>
<div class="t" style="left:126px;top:766px;">Windows Media Player</div>
<svg style="left:105px;top:790px" width="16" height="16"><use href="#fld"/></svg>
<div class="t" style="left:126px;top:790px;">Windows Multimedia Platform</div>
<svg style="left:105px;top:814px" width="16" height="16"><use href="#fld"/></svg>
<div class="t" style="left:126px;top:814px;">Windows NT</div>
<svg style="left:105px;top:838px" width="16" height="16"><use href="#fld"/></svg>
<div class="t" style="left:126px;top:838px;">Windows Photo Viewer</div>

<!-- CONTENT -->
<svg width="0" height="0" style="position:absolute;left:0;top:0"><defs>
<symbol id="tri" viewBox="0 0 7 7"><path d="M6.5 0.5 V6.5 H0.5 Z" fill="#3c3c3c"/></symbol>
<symbol id="bigdesk" viewBox="0 0 42 34">
<rect x="0" y="0" width="42" height="34" rx="1" fill="#7b7b7b"/>
<rect x="2.5" y="2.5" width="37" height="29" fill="#fff"/>
<rect x="4" y="4" width="34" height="20.7" fill="#4680c0"/>
<rect x="19" y="6.7" width="13" height="8.6" fill="#fff"/>
<rect x="9.6" y="13.3" width="13.6" height="8.9" fill="#fff" stroke="#4680c0" stroke-width="0.8"/>
<rect x="4" y="26" width="34" height="3.7" fill="#7b7b7b"/>
</symbol>
</defs></svg>
<svg style="left:338px;top:271px" width="7" height="7"><use href="#tri"/></svg>
<div class="t" style="left:351px;top:266px;font-size:14.5px;line-height:20px;color:#1f3573;">Favorites (3)</div>
<div class="a" style="left:439px;top:276px;width:663px;height:1px;background:#e4e4e4;"></div>
<svg style="left:351px;top:300px" width="42" height="34"><use href="#bigdesk"/></svg>
<div class="t" style="left:401px;top:293px;color:#1a1a1a;">Desktop</div>
<div class="t" style="left:401px;top:309px;color:#6d6d6d;">Shortcut</div>
<div class="t" style="left:401px;top:325px;color:#6d6d6d;">489 bytes</div>
<svg style="left:604px;top:293px" width="40" height="48" viewBox="0 0 40 48">
<defs><linearGradient id="bf" x1="0" y1="0" x2="1" y2="0"><stop offset="0" stop-color="#ead078"/><stop offset="1" stop-color="#f4e0a0"/></linearGradient>
<linearGradient id="ff" x1="0" y1="0" x2="1" y2="0"><stop offset="0" stop-color="#f0d682"/><stop offset="1" stop-color="#faeec0"/></linearGradient>
<linearGradient id="ba" x1="0" y1="0" x2="1" y2="0"><stop offset="0" stop-color="#1a7ad0"/><stop offset="0.5" stop-color="#3cb0f0"/><stop offset="1" stop-color="#1068c0"/></linearGradient></defs>
<path d="M3 1.5 L29 4 V42 L11 44 Z" fill="url(#bf)"/>
<path d="M1.5 1.5 L12 8 V46 L1.5 40 Z" fill="url(#ff)" stroke="#e0c068" stroke-width="0.6"/>
<path d="M22 17.5 H30 V29.5 H37 L26 44 L15.5 29.5 H22 Z" fill="url(#ba)" stroke="#0f5aa8" stroke-width="0.8"/>
</svg>
<div class="t" style="left:655px;top:293px;color:#1a1a1a;">Downloads</div>
<div class="t" style="left:655px;top:309px;color:#6d6d6d;">Shortcut</div>
<div class="t" style="left:655px;top:325px;color:#6d6d6d;">906 bytes</div>
<svg style="left:858px;top:293px" width="36" height="48" viewBox="0 0 36 48">
<path d="M3 1.5 L28 4 V42 L11 44 Z" fill="url(#bf)"/>
<path d="M1.5 1.5 L12 8 V46 L1.5 40 Z" fill="url(#ff)" stroke="#e0c068" stroke-width="0.6"/>
<path d="M12 14.5 L31 16 V46 L11 44 Z" fill="#222"/>
<path d="M13.5 16.5 L27 17.5 V44 L12.5 42.5 Z" fill="#3b98d8"/>
<circle cx="22" cy="22" r="3.6" fill="#c88a20"/><circle cx="22" cy="22" r="2" fill="#e8b040"/>
<path d="M14 22 L18 20 V28 L14 29Z" fill="#c83a30"/>
<circle cx="21" cy="38.5" r="3" fill="#a86a20"/>
<path d="M13 31 H27 V33 H13Z" fill="#223"/>
<g fill="#eee"><rect x="28.3" y="18" width="1.7" height="1.7"/><rect x="28.3" y="21.5" width="1.7" height="1.7"/><rect x="28.3" y="25" width="1.7" height="1.7"/><rect x="28.3" y="28.5" width="1.7" height="1.7"/><rect x="28.3" y="32" width="1.7" height="1.7"/><rect x="28.3" y="35.5" width="1.7" height="1.7"/><rect x="28.3" y="39" width="1.7" height="1.7"/><rect x="28.3" y="42.5" width="1.7" height="1.7"/></g>
</svg>
<div class="t" style="left:909px;top:293px;color:#1a1a1a;">Videos</div>
<div class="t" style="left:909px;top:309px;color:#6d6d6d;">Shortcut</div>
<div class="t" style="left:909px;top:325px;color:#6d6d6d;">905 bytes</div>

<svg style="left:338px;top:354px" width="7" height="7"><use href="#tri"/></svg>
<div class="t" style="left:351px;top:349px;font-size:14.5px;line-height:20px;color:#1f3573;">Frequent folders (1)</div>
<div class="a" style="left:489px;top:359px;width:613px;height:1px;background:#e4e4e4;"></div>
<svg style="left:351px;top:383px" width="42" height="34"><use href="#bigdesk"/></svg>
<div class="t" style="left:401px;top:392px;color:#1a1a1a;">Desktop</div>

<svg style="left:338px;top:437px" width="7" height="7"><use href="#tri"/></svg>
<div class="t" style="left:351px;top:432px;font-size:14.5px;line-height:20px;color:#1f3573;">Recent files (2)</div>
<div class="a" style="left:456px;top:442px;width:646px;height:1px;background:#e4e4e4;"></div>
<svg style="left:348px;top:466px" width="47" height="32" viewBox="0 0 47 32">
<defs><linearGradient id="t1" x1="0" y1="0" x2="1" y2="1"><stop offset="0" stop-color="#66605c"/><stop offset="1" stop-color="#4e4a48"/></linearGradient></defs>
<rect x="1" y="1" width="45" height="30" fill="#d8d8d8" opacity="0.5"/>
<rect x="0" y="0" width="45" height="30" fill="url(#t1)"/>
<path d="M0 14 L15.5 21.5 L35 12.5 L35.5 14.5 L16 24 L0 16.5 Z" fill="#2e2a28"/>
<path d="M0 0.5 L7 0.8 L35.5 10 L35 12.5 L15.5 21.5 L0 14 Z" fill="#eeeeee"/>
<path d="M0 6 L20 12 L15.5 21.5 L0 14 Z" fill="#e2e2e2"/>
</svg>
<div class="t" style="left:401px;top:459px;color:#1a1a1a;">dsc06513.jpg</div>
<div class="t" style="left:401px;top:475px;color:#6d6d6d;">Shortcut</div>
<div class="t" style="left:401px;top:491px;color:#6d6d6d;">428 bytes</div>
<svg style="left:602px;top:466px" width="47" height="32" viewBox="0 0 47 32">
<rect x="1" y="1" width="45" height="30" fill="#d8d8d8" opacity="0.5"/>
<rect x="0" y="0" width="45" height="30" fill="#30312e"/>
<path d="M7 8 L17 1.2 Q18.5 0.6 20 1.6 L38.5 15.5 Q39.5 17 38.5 18.3 L30 27.2 Q28.5 28.4 27 27.5 L7 10.5 Q6 9 7 8 Z" fill="#c4c8c6"/>
<path d="M9 8.5 L17.5 2.8 L24 7.5 L15.5 13.5 Z" fill="#d2d6d4"/>
</svg>
<div class="t" style="left:655px;top:459px;color:#1a1a1a;">1_dsc06489.jpg</div>
<div class="t" style="left:655px;top:475px;color:#6d6d6d;">Shortcut</div>
<div class="t" style="left:655px;top:491px;color:#6d6d6d;">440 bytes</div>

<svg style="left:338px;top:520px" width="7" height="7"><use href="#tri"/></svg>
<div class="t" style="left:351px;top:515px;font-size:14.5px;line-height:20px;color:#1f3573;">Unspecified (1)</div>
<div class="a" style="left:458px;top:525px;width:644px;height:1px;background:#e4e4e4;"></div>
<svg style="left:350px;top:548px" width="43" height="40" viewBox="0 0 43 40">
<path d="M21.5 7 L26 1.5 H41 Q42 1.5 42 3 V7" fill="#fff" stroke="#cdb080" stroke-width="1"/>
<rect x="1" y="7" width="41" height="30" fill="#e8bc74"/>
<path d="M3.5 38.5 V22 Q3.5 18.5 7 18.5 H36 Q39.5 18.5 39.5 22 V38.5 H29.5 V28 H13.5 V38.5 Z" fill="#4580c0" stroke="#fff" stroke-width="1.3"/>
<rect x="14.5" y="29" width="14" height="8" fill="#e8bc74"/>
</svg>
<div class="t" style="left:401px;top:558px;color:#1a1a1a;">File Explorer</div>

<!-- status bar -->
<div class="a" style="left:107px;top:866px;width:1px;height:16px;background:#ececec;"></div>
<svg style="left:1065px;top:866px" width="16" height="13" viewBox="0 0 16 13">
<g fill="#fff" stroke="#707070" stroke-width="0.9"><rect x="0.5" y="0.5" width="3.8" height="3.8" rx="0.7"/><rect x="0.5" y="4.5" width="3.8" height="3.8" rx="0.7"/><rect x="0.5" y="8.5" width="3.8" height="3.8" rx="0.7"/></g>
<g fill="#404040"><rect x="2" y="2" width="1" height="1"/><rect x="2" y="6" width="1" height="1"/><rect x="2" y="10" width="1" height="1"/></g>
<g stroke="#505050" stroke-width="1"><path d="M6 2.5H9.8M11 2.5H15M6 6.5H9.8M11 6.5H15M6 10.5H9.8M11 10.5H15"/></g>
</svg>
<svg style="left:1088px;top:867px" width="14" height="12" viewBox="0 0 14 12">
<defs><linearGradient id="ph" x1="0" y1="0" x2="0" y2="1"><stop offset="0" stop-color="#d0f4f4"/><stop offset="0.45" stop-color="#7ab0b0"/><stop offset="1" stop-color="#1e4a46"/></linearGradient></defs>
<rect x="0.5" y="0.5" width="13" height="11" rx="1" fill="#eaf8f8" stroke="#6a7272"/>
<rect x="2" y="2" width="10" height="8" fill="url(#ph)"/>
<path d="M2 5 Q6 3 12 4.5 V2 H2Z" fill="#e0f8f8" opacity="0.8"/>
</svg>

<div class="t" style="left:59px;top:866px;color:#262626;">7 items</div>

<div class="a" style="left:1139px;top:895px;width:1px;height:11px;background:#e4e0f8;"></div>
</body></html>
